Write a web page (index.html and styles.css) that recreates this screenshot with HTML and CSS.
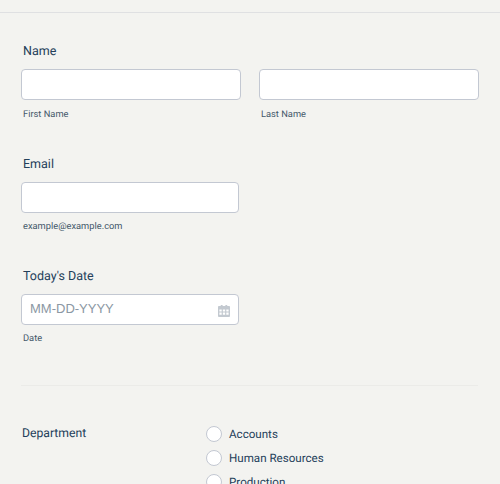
FILE: index.html
```html
<!DOCTYPE html>
<html>
   <head>
      <meta name="viewport" content="width=device-width, initial-scale=1">
      <link rel="stylesheet" href="styles.css">
   </head>
   <body>
      <form class="form">
        <div class="field field-name">
          <label class="label">Name</label>
          <div class="name-row">
            <div class="name-col">
              <input type="text" class="input">
              <p class="hint">First Name</p>
            </div>
            <div class="name-col">
              <input type="text" class="input">
              <p class="hint">Last Name</p>
            </div>
          </div>
        </div>
        <div class="field">
          <label class="label">Email</label>
          <input type="text" class="input input-short">
          <p class="hint">example@example.com</p>
        </div>
        <div class="field">
          <label class="label">Today's Date</label>
          <div class="date-box">
            <span class="date-text">MM-DD-YYYY</span>
            <svg class="date-icon" width="12" height="12" viewBox="0 0 13 13">
              <path fill="#c3c9d0" fill-rule="evenodd" d="M1 1h2V0h2v1h3V0h2v1h2a1 1 0 0 1 1 1v10a1 1 0 0 1-1 1H1a1 1 0 0 1-1-1V2a1 1 0 0 1 1-1zM1.500 5v2h2.500V5zM5.250 5v2h2.500V5zM9 5v2h2.500V5zM1.500 8v2.500h2.500V8zM5.250 8v2.500h2.500V8zM9 8v2.500h2.500V8z"/>
            </svg>
          </div>
          <p class="hint">Date</p>
        </div>
        <hr class="divider">
        <div class="dept">
          <label class="dept-label">Department</label>
          <div class="options">
            <div class="option"><span class="radio"></span>Accounts</div>
            <div class="option"><span class="radio"></span>Human Resources</div>
            <div class="option"><span class="radio"></span>Production</div>
          </div>
        </div>
      </form>
   </body>
</html>
```

FILE: styles.css
```css
html,
body {
  height: 484px;
  overflow: hidden;
}

body {
  margin: 0;
  background-color: #f3f3f0;
  font-family: Roboto, "Liberation Sans", sans-serif;
  color: #24405a;
  text-rendering: geometricPrecision;
}

.form {
  border-top: 1px solid #dfe0e2;
  margin-top: 12px;
  padding: 31px 21px 0 21px;
}

.field {
  margin-bottom: 36px;
}

.label {
  display: block;
  font-size: 12.500px;
  line-height: 16px;
  margin: 0 0 9px 2px;
}

.name-row {
  display: flex;
  gap: 18px;
}

.name-col {
  flex: 1;
}

.input {
  display: block;
  width: 100%;
  height: 31px;
  box-sizing: border-box;
  background-color: #fff;
  border: 1px solid #c3c8d2;
  border-radius: 4px;
}

.input-short {
  width: 218px;
}

.hint {
  font-size: 9.300px;
  line-height: 12px;
  color: #44586a;
  margin: 8px 0 0 2px;
}

.name-col .hint {
  margin-top: 9px;
}

.date-box {
  display: flex;
  align-items: center;
  justify-content: space-between;
  width: 218px;
  height: 31px;
  box-sizing: border-box;
  padding: 0 8px;
  background-color: #fff;
  border: 1px solid #c3c8d2;
  border-radius: 4px;
}

.date-text {
  font-family: "Liberation Sans", sans-serif;
  font-size: 13px;
  color: #8c98a4;
  margin-bottom: 2px;
}

.date-icon {
  margin-top: 2px;
}

.divider {
  border: 0;
  border-top: 1px solid #ebebe8;
  margin: 40px 1px 0 0;
}

.dept {
  display: flex;
  margin-top: 40px;
  margin-left: 1px;
}

.dept-label {
  width: 184px;
  font-size: 12.200px;
  line-height: 15px;
}

.options {
  display: flex;
  flex-direction: column;
  gap: 8px;
}

.option {
  display: flex;
  align-items: center;
  gap: 7px;
  height: 16px;
  font-size: 11.600px;
}

.radio {
  width: 14px;
  height: 14px;
  background-color: #fff;
  border: 1px solid #c3c8d2;
  border-radius: 50%;
}
```
